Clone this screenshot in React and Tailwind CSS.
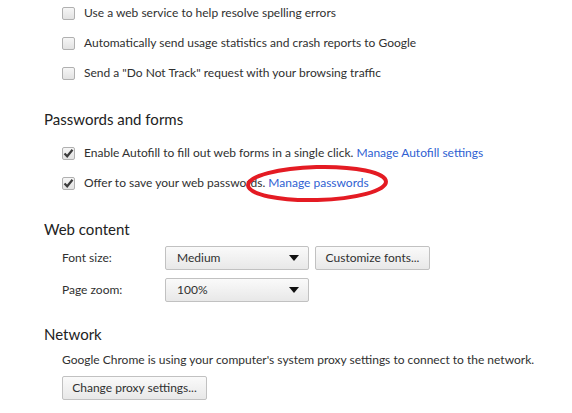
import React from "react";

const font = { fontFamily: "Lato, 'Open Sans', sans-serif" };

function Checkbox({ checked }) {
    return (
        <span className="w-[13px] h-[13px] shrink-0 rounded-[2px] border border-[#b0b0b0] bg-gradient-to-b from-[#f6f6f6] to-[#e2e2e2] flex items-center justify-center">
            {checked && (
                <svg width="11" height="11" viewBox="0 0 11 11">
                    <path d="M1.5 5.5 L4.2 8.3 L9.5 1.8" fill="none" stroke="#3c3c3c" strokeWidth="2.2" />
                </svg>
            )}
        </span>
    );
}

function CheckRow({ checked, children }) {
    return (
        <div className="h-[26px] flex items-center gap-[9px] pl-[62px]">
            <Checkbox checked={checked} />
            <span>{children}</span>
        </div>
    );
}

function Select({ value }) {
    return (
        <div className="w-[144px] h-[24px] rounded-[2px] border border-[#c1c1c1] bg-gradient-to-b from-[#fafafa] to-[#e8e8e8] flex items-center justify-between pl-[11px] pr-[9px]">
            <span>{value}</span>
            <svg width="10" height="6" viewBox="0 0 10 6">
                <path d="M0 0 H10 L5 6 Z" fill="#111" />
            </svg>
        </div>
    );
}

function Button({ children, className }) {
    return (
        <div className={"h-[24px] rounded-[2px] border border-[#c1c1c1] bg-gradient-to-b from-[#fafafa] to-[#e8e8e8] flex items-center justify-center " + className}>
            {children}
        </div>
    );
}

export default function App() {
    return (
        <div className="w-[572px] h-[413px] bg-white overflow-hidden relative text-[12px] text-[#303030]" style={font}>
            <div className="flex flex-col gap-[4px]">
                <CheckRow>Use a web service to help resolve spelling errors</CheckRow>
                <CheckRow>Automatically send usage statistics and crash reports to Google</CheckRow>
                <CheckRow>Send a "Do Not Track" request with your browsing traffic</CheckRow>
            </div>

            <h2 className="mt-[23px] h-[20px] leading-[20px] pl-[44px] text-[15px] text-[#222]">Passwords and forms</h2>
            <div className="mt-[11px] flex flex-col gap-[4px]">
                <CheckRow checked>
                    Enable Autofill to fill out web forms in a single click. <span className="text-[#2f5fd2]">Manage Autofill settings</span>
                </CheckRow>
                <CheckRow checked>
                    Offer to save your web passwords. <span className="text-[#2f5fd2]">Manage passwords</span>
                </CheckRow>
            </div>

            <h2 className="mt-[23px] h-[20px] leading-[20px] pl-[44px] text-[15px] text-[#222]">Web content</h2>
            <div className="mt-[7px] pl-[62px] flex flex-col gap-[8px]">
                <div className="flex items-center">
                    <span className="w-[103px]">Font size:</span>
                    <Select value="Medium" />
                    <Button className="ml-[6px] w-[115px]">Customize fonts...</Button>
                </div>
                <div className="flex items-center">
                    <span className="w-[103px]">Page zoom:</span>
                    <Select value="100%" />
                </div>
            </div>

            <h2 className="mt-[22px] h-[20px] leading-[20px] pl-[44px] text-[15px] text-[#222]">Network</h2>
            <p className="mt-[8px] pl-[62px] leading-[16px]">Google Chrome is using your computer's system proxy settings to connect to the network.</p>
            <div className="mt-[8px] pl-[62px]">
                <Button className="w-[145px]">Change proxy settings...</Button>
            </div>

            <svg className="absolute left-[244px] top-[164px]" width="148" height="40" viewBox="0 0 148 40">
                <ellipse cx="73" cy="19.5" rx="69" ry="16.5" fill="none" stroke="#e41b23" strokeWidth="4" transform="rotate(-1.5 73 19.5)" />
            </svg>
        </div>
    );
}
